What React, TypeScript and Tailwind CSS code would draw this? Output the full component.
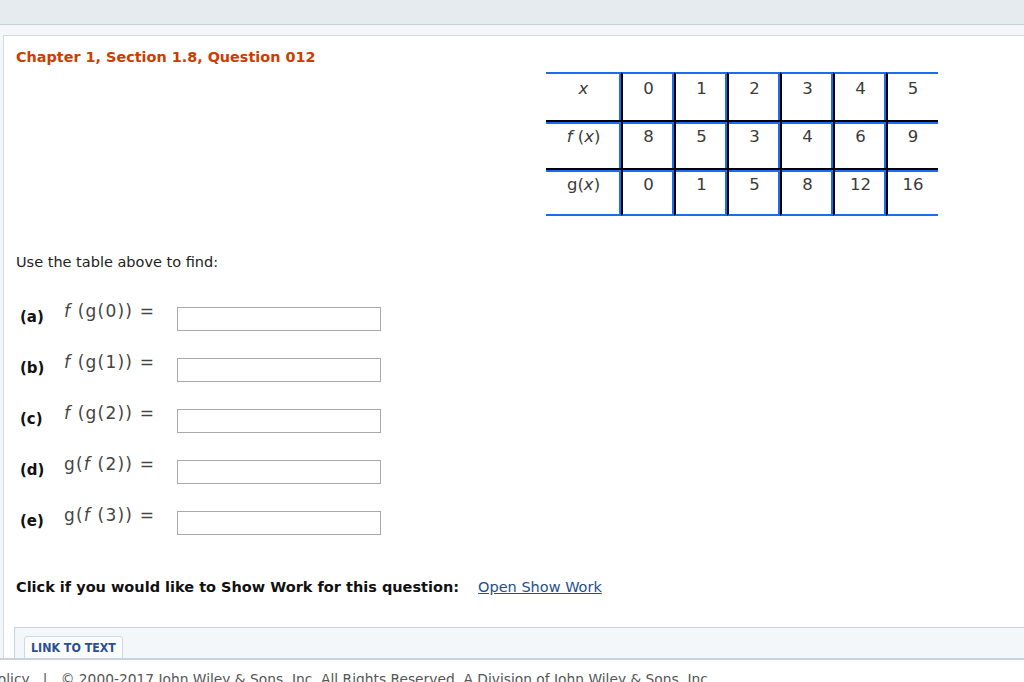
const xs = ['0', '1', '2', '3', '4', '5'];
const fx = ['8', '5', '3', '4', '6', '9'];
const gx = ['0', '1', '5', '8', '12', '16'];

const parts = [
  { key: 'a', outer: 'f', inner: 'g', arg: '0' },
  { key: 'b', outer: 'f', inner: 'g', arg: '1' },
  { key: 'c', outer: 'f', inner: 'g', arg: '2' },
  { key: 'd', outer: 'g', inner: 'f', arg: '2' },
  { key: 'e', outer: 'g', inner: 'f', arg: '3' },
];

const Fn = ({ name }: { name: string }) =>
  name === 'f' ? <span className="italic">f&nbsp;</span> : <span>g</span>;

const Cell = ({ row, col, children }: { row: number; col: number; children: React.ReactNode }) => {
  const top = row === 0 ? 'border-t-2 border-t-[#1a6cf0]' : 'border-t-2 border-t-black';
  const bottom = row === 2 ? ' border-b-2 border-b-[#1a6cf0]' : '';
  const left = col > 0 ? ' border-l-2 border-l-black' : '';
  const shadow =
    col < 6
      ? row > 0
        ? ' shadow-[inset_-2px_0_0_#1a6cf0,inset_0_2px_0_#1a6cf0]'
        : ' shadow-[inset_-2px_0_0_#1a6cf0]'
      : row > 0
        ? ' shadow-[inset_0_2px_0_#1a6cf0]'
        : '';
  return (
    <td
      className={
        `h-[48px] p-0 pt-[5px] align-top text-center text-[16.5px] leading-5 text-[#3a3a3a] ${top}${bottom}${left}${shadow}` +
        (col === 0 ? ' w-[75px]' : col === 6 ? ' w-[52px]' : ' w-[53px]')
      }
    >
      {children}
    </td>
  );
};

const App = () => {
  return (
    <div className="flex h-[682px] flex-col overflow-hidden bg-[#f4f7fa] font-['DejaVu_Sans',sans-serif] text-[14.5px] text-[#222]">
      <div className="h-[25px] shrink-0 border-b border-[#c9d3dd] bg-[#e6ebf0]"></div>
      <div className="flex min-h-0 flex-1 flex-col pl-[3px] pt-[10px]">
        <div className="flex min-h-0 flex-1 flex-col border-l border-t border-[#d3dbe4] bg-white">
          <div className="w-[934px] pl-[12px] pt-[11px]">
            <div className="text-[14.4px] font-bold leading-5 text-[#cc3d00]">Chapter 1, Section 1.8, Question 012</div>
            <div className="mt-[5px] flex justify-end">
              <table className="border-separate border-spacing-0">
                <tbody>
                  <tr>
                    <Cell row={0} col={0}>
                      <span className="italic">x</span>
                    </Cell>
                    {xs.map((v, i) => (
                      <Cell key={i} row={0} col={i + 1}>
                        {v}
                      </Cell>
                    ))}
                  </tr>
                  <tr>
                    <Cell row={1} col={0}>
                      <span className="italic">f</span> (<span className="italic">x</span>)
                    </Cell>
                    {fx.map((v, i) => (
                      <Cell key={i} row={1} col={i + 1}>
                        {v}
                      </Cell>
                    ))}
                  </tr>
                  <tr>
                    <Cell row={2} col={0}>
                      g(<span className="italic">x</span>)
                    </Cell>
                    {gx.map((v, i) => (
                      <Cell key={i} row={2} col={i + 1}>
                        {v}
                      </Cell>
                    ))}
                  </tr>
                </tbody>
              </table>
            </div>
            <div className="mt-[38px] leading-4">Use the table above to find:</div>
            <div className="mt-[37px] flex flex-col gap-[27px]">
              {parts.map((p) => (
                <div key={p.key} className="flex h-[24px] items-center">
                  <span className="-mt-[4px] w-[48px] pl-[4px] text-[15px] font-bold text-[#111]">({p.key})</span>
                  <span className="-mt-[15px] w-[113px] text-[17px] tracking-[0.07em] whitespace-nowrap text-[#444]">
                    <Fn name={p.outer} />(<Fn name={p.inner} />({p.arg})) =
                  </span>
                  <input
                    type="text"
                    className="h-[24px] w-[204px] border border-[#a9a9a9] bg-white outline-none"
                  />
                </div>
              ))}
            </div>
            <div className="mt-[42px] flex items-center text-[14.5px]">
              <span className="font-bold text-[#111]">Click if you would like to Show Work for this question:</span>
              <a href="#" className="ml-[19px] text-[#1f4e8c] underline">
                Open Show Work
              </a>
            </div>
          </div>
          <div className="mt-auto ml-[10px] h-[31px] border-l border-t border-[#c9d3dd] bg-[#f4f7fa] pl-[9px] pt-[8px]">
            <button className="h-[24px] rounded-t-[3px] border border-[#d0d8e2] bg-[#f9fbfd] px-[6px] font-['DejaVu_Sans_Condensed','Liberation_Sans',sans-serif] text-[12.3px] leading-5 font-bold text-[#2b4f8c]">
              LINK TO TEXT
            </button>
          </div>
        </div>
      </div>
      <div className="h-[24px] shrink-0 border-t-2 border-[#c9d3dd] bg-white pt-[11px]">
        <div className="-ml-[10px] whitespace-nowrap text-[13.8px] leading-4 text-[#555]">
          Policy&nbsp;&nbsp; | &nbsp;&nbsp;© 2000-2017 John Wiley &amp; Sons, Inc. All Rights Reserved. A Division of John Wiley &amp; Sons, Inc.
        </div>
      </div>
    </div>
  );
};

export default App;
